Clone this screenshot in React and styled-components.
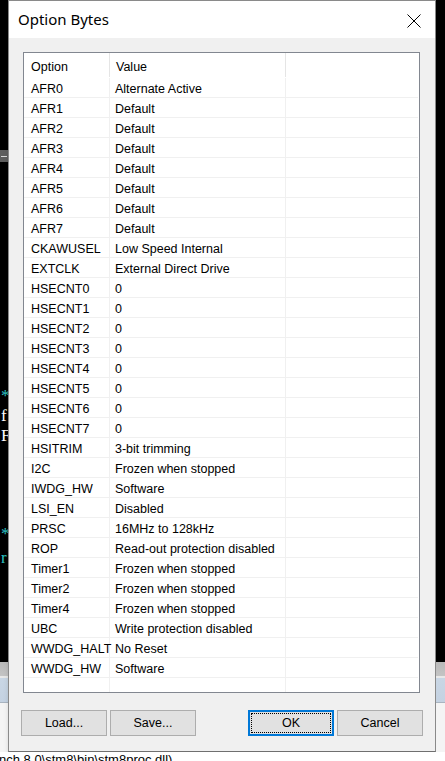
import React from "react";
import styled, { createGlobalStyle } from "styled-components";

const options = [
  ["AFR0", "Alternate Active"],
  ["AFR1", "Default"],
  ["AFR2", "Default"],
  ["AFR3", "Default"],
  ["AFR4", "Default"],
  ["AFR5", "Default"],
  ["AFR6", "Default"],
  ["AFR7", "Default"],
  ["CKAWUSEL", "Low Speed Internal"],
  ["EXTCLK", "External Direct Drive"],
  ["HSECNT0", "0"],
  ["HSECNT1", "0"],
  ["HSECNT2", "0"],
  ["HSECNT3", "0"],
  ["HSECNT4", "0"],
  ["HSECNT5", "0"],
  ["HSECNT6", "0"],
  ["HSECNT7", "0"],
  ["HSITRIM", "3-bit trimming"],
  ["I2C", "Frozen when stopped"],
  ["IWDG_HW", "Software"],
  ["LSI_EN", "Disabled"],
  ["PRSC", "16MHz to 128kHz"],
  ["ROP", "Read-out protection disabled"],
  ["Timer1", "Frozen when stopped"],
  ["Timer2", "Frozen when stopped"],
  ["Timer4", "Frozen when stopped"],
  ["UBC", "Write protection disabled"],
  ["WWDG_HALT", "No Reset"],
  ["WWDG_HW", "Software"],
];

const App = () => {
  return (
    <>
      <GlobalStyle />
      <Screen>
        <Desk>
          <LeftGutter>
            <GrayTab>
              <Dash />
            </GrayTab>
            <Glyph $top={225} $color="#2ec4c4">*</Glyph>
            <Glyph $top={2} $color="#ffffff">f</Glyph>
            <Glyph $top={2} $color="#ffffff">F</Glyph>
            <Glyph $top={80} $color="#2ec4c4">*</Glyph>
            <Glyph $top={6} $color="#2ec4c4">r</Glyph>
            <Spacer />
            <BackWindow />
          </LeftGutter>

          <Dialog>
            <TitleBar>
              <Title>Option Bytes</Title>
              <CloseButton>
                <svg width="14" height="14" viewBox="0 0 14 14">
                  <path d="M0.5 0.5 L13.5 13.5 M13.5 0.5 L0.5 13.5" stroke="#000" strokeWidth="1" fill="none" />
                </svg>
              </CloseButton>
            </TitleBar>

            <Body>
              <ListBox>
                <HeaderRow>
                  <HeaderCell $w={86} $pad={7}>Option</HeaderCell>
                  <HeaderCell $w={176} $pad={6}>Value</HeaderCell>
                  <HeaderCell $last />
                </HeaderRow>
                {options.map(([name, value]) => (
                  <Row key={name}>
                    <Cell $w={86} $pad={7}>{name}</Cell>
                    <Cell $w={176} $pad={5}>{value}</Cell>
                    <Cell $last />
                  </Row>
                ))}
                <FillerRow>
                  <Cell $w={86} />
                  <Cell $w={176} />
                  <Cell $last />
                </FillerRow>
              </ListBox>

              <ButtonBar>
                <ButtonGroup>
                  <Button>Load...</Button>
                  <Button>Save...</Button>
                </ButtonGroup>
                <ButtonGroup>
                  <Button $default>
                    <FocusRing>OK</FocusRing>
                  </Button>
                  <Button>Cancel</Button>
                </ButtonGroup>
              </ButtonBar>
            </Body>
          </Dialog>

          <RightGutter>
            <Spacer />
            <BackWindow />
          </RightGutter>
        </Desk>
        <StatusLine>nch 8.0\stm8\bin\stm8proc.dll)</StatusLine>
      </Screen>
    </>
  );
};

const GlobalStyle = createGlobalStyle`
  html, body {
    margin: 0;
    padding: 0;
    background: #000;
  }
  body {
    font-family: "Liberation Sans", Arial, sans-serif;
  }
`;

const Screen = styled.div`
  width: 445px;
  height: 761px;
  display: flex;
  flex-direction: column;
  overflow: hidden;
  background: #000;
`;

const Desk = styled.div`
  display: flex;
  height: 752px;
`;

const LeftGutter = styled.div`
  width: 8px;
  display: flex;
  flex-direction: column;
  padding-top: 150px;
  overflow: hidden;
`;

const RightGutter = styled.div`
  width: 9px;
  display: flex;
  flex-direction: column;
  overflow: hidden;
`;

const GrayTab = styled.div`
  height: 12px;
  background: #5e5e5e;
  display: flex;
  align-items: center;
`;

const Dash = styled.div`
  width: 6px;
  height: 1px;
  background: #d8d8d8;
  margin-left: 1px;
`;

const Glyph = styled.div`
  margin-top: ${(p) => p.$top}px;
  margin-left: 1px;
  font-family: "Liberation Serif", serif;
  font-size: 17px;
  line-height: 18px;
  color: ${(p) => p.$color};
`;

const Spacer = styled.div`
  flex: 1;
`;

const BackWindow = styled.div`
  height: 90px;
  flex-shrink: 0;
  background: linear-gradient(
    to bottom,
    #b9b9b9 0px,
    #c4c4c4 14px,
    #e8e8e8 14px,
    #e8e8e8 16px,
    #c9d6e4 16px,
    #c4d2e2 40px,
    #a9b4c0 40px,
    #a9b4c0 41px,
    #f4f4f4 41px
  );
`;

const Dialog = styled.div`
  width: 426px;
  border: 1px solid #8a8a8a;
  border-bottom-color: #6f6f6f;
  display: flex;
  flex-direction: column;
  background: #f0f0f0;
  box-shadow: 2px 2px 6px rgba(0, 0, 0, 0.25);
`;

const TitleBar = styled.div`
  height: 37px;
  background: #fff;
  display: flex;
  align-items: center;
  justify-content: space-between;
  padding: 0 14px 0 9px;
`;

const Title = styled.div`
  font-family: "Noto Sans", "Liberation Sans", sans-serif;
  font-size: 15px;
  color: #000;
  margin-top: -1px;
`;

const CloseButton = styled.div`
  width: 14px;
  height: 14px;
  display: flex;
  margin-top: 3px;
`;

const Body = styled.div`
  flex: 1;
  display: flex;
  flex-direction: column;
  padding: 14px 12px 13px 12px;
`;

const ListBox = styled.div`
  margin: 0 3px 0 2px;
  height: 641px;
  box-sizing: border-box;
  border: 1px solid #828790;
  background: #fff;
  display: flex;
  flex-direction: column;
  font-size: 12.5px;
  color: #000;
  overflow: hidden;
`;

const HeaderRow = styled.div`
  display: flex;
  height: 24px;
  flex-shrink: 0;
  padding-right: 1px;
  padding-bottom: 1px;
`;

const HeaderCell = styled.div`
  ${(p) => (p.$last ? "flex: 1;" : `width: ${p.$w}px; border-right: 1px solid #e5e5e5;`)}
  box-sizing: border-box;
  display: flex;
  align-items: center;
  padding-left: ${(p) => p.$pad || 0}px;
  padding-top: 3px;
`;

const Row = styled.div`
  display: flex;
  height: 19px;
  flex-shrink: 0;
  margin-right: 1px;
  border-bottom: 1px solid #f0f0f0;
`;

const FillerRow = styled(Row)`
  flex: 1;
  border-bottom: none;
`;

const Cell = styled.div`
  ${(p) => (p.$last ? "flex: 1;" : `width: ${p.$w}px; border-right: 1px solid #f0f0f0;`)}
  box-sizing: border-box;
  display: flex;
  align-items: center;
  padding-left: ${(p) => p.$pad || 0}px;
  padding-top: 2px;
  white-space: nowrap;
`;

const ButtonBar = styled.div`
  margin-top: 17px;
  display: flex;
  justify-content: space-between;
`;

const ButtonGroup = styled.div`
  display: flex;
  gap: 3px;
`;

const Button = styled.div`
  width: 86px;
  height: 26px;
  box-sizing: border-box;
  background: #e1e1e1;
  border: ${(p) => (p.$default ? "2px solid #0078d7" : "1px solid #adadad")};
  display: flex;
  align-items: center;
  justify-content: center;
  font-size: 12.5px;
  color: #000;
  padding: ${(p) => (p.$default ? "1px" : "0")};
`;

const FocusRing = styled.div`
  flex: 1;
  align-self: stretch;
  border: 1px dotted #000;
  display: flex;
  align-items: center;
  justify-content: center;
`;

const StatusLine = styled.div`
  height: 9px;
  background: #fff;
  overflow: hidden;
  font-family: "Liberation Sans", Arial, sans-serif;
  font-size: 13px;
  line-height: 13px;
  padding-top: 1px;
  box-sizing: border-box;
  color: #000;
  white-space: nowrap;
  margin-left: -1px;
`;

export default App;
